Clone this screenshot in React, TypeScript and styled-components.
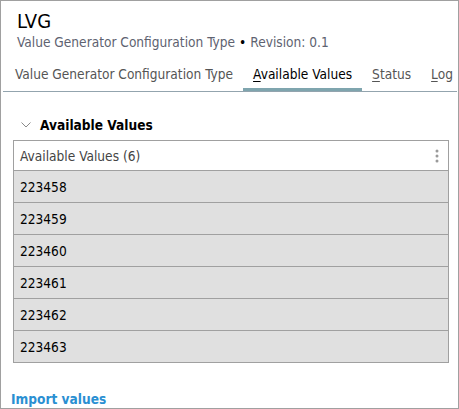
import styled, { createGlobalStyle } from "styled-components";

const GlobalStyle = createGlobalStyle`
	html, body {
		margin: 0;
		padding: 0;
		background: #ffffff;
	}
	body {
		font-family: "DejaVu Sans Condensed", "Noto Sans", "Liberation Sans", sans-serif;
		font-size: 13.6px;
	}
`;

const Frame = styled.div`
	width: 459px;
	height: 409px;
	box-sizing: border-box;
	border: 1px solid #a0a0a0;
	overflow: hidden;
	display: flex;
	flex-direction: column;
`;

const Header = styled.div`
	padding: 8px 16px 0;
`;

const Title = styled.div`
	font-size: 20px;
	line-height: 24px;
	color: #000000;
`;

const Subtitle = styled.div`
	line-height: 18px;
	color: #5e6270;
	white-space: nowrap;
`;

const Bullet = styled.span`
	color: #000000;
	margin: 0 4px;
`;

const TabBar = styled.div`
	display: flex;
	margin: 14px 1px 0 2px;
	padding-left: 2px;
	border-bottom: 1px solid #93a4ae;
	white-space: nowrap;
	overflow: hidden;
`;

const Tab = styled.div<{ $active?: boolean }>`
	flex: none;
	padding: 0 10px 9px;
	line-height: 18px;
	color: ${(p) => (p.$active ? "#000000" : "#555555")};
	border-bottom: 3px solid ${(p) => (p.$active ? "#7fa5ae" : "transparent")};
	u {
		text-decoration: underline;
		text-underline-offset: 2px;
	}
`;

const Content = styled.div`
	padding: 24px 9px 0 12px;
	display: flex;
	flex-direction: column;
`;

const SectionHeader = styled.div`
	display: flex;
	align-items: center;
	gap: 9px;
	padding-left: 8px;
	font-weight: bold;
	line-height: 18px;
	color: #000000;
`;

const Chevron = styled.svg`
	width: 10px;
	height: 6px;
	flex: none;
`;

const Table = styled.div`
	margin-top: 6px;
	border: 1px solid #a0a0a0;
`;

const TableHead = styled.div`
	height: 29px;
	display: flex;
	align-items: center;
	justify-content: space-between;
	padding: 0 9px 0 6px;
	color: #444444;
	line-height: 18px;
	background: #ffffff;
`;

const MenuDots = styled.svg`
	width: 4px;
	height: 14px;
`;

const Row = styled.div`
	height: 31px;
	display: flex;
	align-items: center;
	padding-left: 6px;
	border-top: 1px solid #a0a0a0;
	background: #e0e0e0;
	color: #000000;
	line-height: 18px;
`;

const ImportLink = styled.a`
	margin: 27px 0 0 10px;
	font-weight: bold;
	line-height: 18px;
	color: #2a8fd2;
	text-decoration: none;
	cursor: pointer;
`;

const values = ["223458", "223459", "223460", "223461", "223462", "223463"];

function App() {
	return (
		<>
			<GlobalStyle />
			<Frame>
				<Header>
					<Title>LVG</Title>
					<Subtitle>
						Value Generator Configuration Type<Bullet>•</Bullet>Revision: 0.1
					</Subtitle>
				</Header>
				<TabBar>
					<Tab>Value Generator Configuration Type</Tab>
					<Tab $active>
						<u>A</u>vailable Values
					</Tab>
					<Tab>
						<u>S</u>tatus
					</Tab>
					<Tab>
						<u>L</u>og
					</Tab>
				</TabBar>
				<Content>
					<SectionHeader>
						<Chevron viewBox="0 0 10 6">
							<path d="M0.5 0.5 L5 5 L9.5 0.5" fill="none" stroke="#8a8a8a" strokeWidth="1" />
						</Chevron>
						Available Values
					</SectionHeader>
					<Table>
						<TableHead>
							Available Values ({values.length})
							<MenuDots viewBox="0 0 4 14">
								<circle cx="2" cy="2" r="1.5" fill="#9a9a9a" />
								<circle cx="2" cy="7" r="1.5" fill="#9a9a9a" />
								<circle cx="2" cy="12" r="1.5" fill="#9a9a9a" />
							</MenuDots>
						</TableHead>
						{values.map((v) => (
							<Row key={v}>{v}</Row>
						))}
					</Table>
				</Content>
				<ImportLink>Import values</ImportLink>
			</Frame>
		</>
	);
}

export default App;
